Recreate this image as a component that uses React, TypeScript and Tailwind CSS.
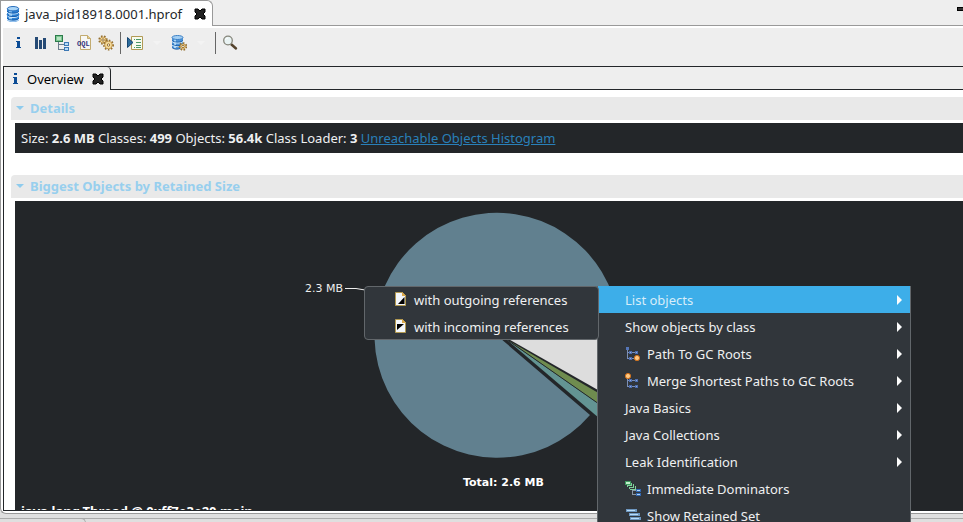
import type { ReactNode } from "react";
import { clsx } from "clsx";

interface IconProps {
  children: ReactNode;
  crisp?: boolean;
}

function Icon({ children, crisp = false }: IconProps) {
  return (
    <svg className="h-4 w-4 shrink-0" viewBox="0 0 16 16" fill="none" shapeRendering={crisp ? "crispEdges" : "auto"} aria-hidden="true">
      {children}
    </svg>
  );
}

function DatabaseIcon() {
  return (
    <Icon>
      <path d="M2 2.500v11C2 15 4.500 15.800 8 15.800s6-.8 6-2.300v-11z" fill="#2f83d6" />
      <path d="M4 3v11.500h3V3z" fill="#8cc6f5" />
      <path d="M2 6c1 1.500 3 2 6 2s5-.5 6-2M2 9.500c1 1.500 3 2 6 2s5-.5 6-2M2 13c1 1.500 3 2 6 2s5-.5 6-2" stroke="#d5ebfc" />
      <path d="M2 5c1 1.500 3 2 6 2s5-.5 6-2M2 8.500c1 1.500 3 2 6 2s5-.5 6-2M2 12c1 1.500 3 2 6 2s5-.5 6-2" stroke="#1a5fae" />
      <ellipse cx="8" cy="2.700" rx="5.700" ry="2.200" fill="#a9d5f8" stroke="#2a6fbd" />
    </Icon>
  );
}

function InfoIcon() {
  return (
    <Icon crisp>
      <path d="M7 2h3v2H7zM6 6h4v6h1v1H6v-1h1V7H6z" fill="#0b4c95" />
    </Icon>
  );
}

function HistogramIcon() {
  return (
    <Icon crisp>
      <path d="M3 2h3v12H3zM7 5h3v9H7zM11 3h3v11h-3z" fill="#254a75" />
    </Icon>
  );
}

function TreeIcon() {
  return (
    <Icon crisp>
      <path d="M4.500 7v7.500H10M4.500 9.500H10" stroke="#6b7c8c" />
      <rect x="1.500" y="0.500" width="7" height="6" fill="#7cc592" stroke="#2c7c4a" />
      <rect x="3" y="2" width="4" height="3" fill="#b7e5c1" />
      <rect x="10.500" y="7.500" width="4" height="3" fill="#b9dcf8" stroke="#3d78b4" />
      <rect x="10.500" y="12.500" width="4" height="3" fill="#b9dcf8" stroke="#3d78b4" />
    </Icon>
  );
}

function OqlIcon() {
  return (
    <Icon>
      <path d="M4.500.5h7l3 3v11h-10z" fill="#f7f7f4" stroke="#c2ab70" />
      <path d="M11.500.5v3h3" fill="#e8cf8b" stroke="#c2ab70" />
      <text x="1" y="11" fill="#30307e" fontSize="7" fontWeight="700" fontFamily="Liberation Mono, monospace">
        OQL
      </text>
    </Icon>
  );
}

function GearShape({ cx, cy, r }: { cx: number; cy: number; r: number }) {
  return (
    <g>
      <circle cx={cx} cy={cy} r={r} stroke="#95702f" strokeWidth="2" strokeDasharray="1.500 1.500" />
      <circle cx={cx} cy={cy} r={r - 0.7} fill="#f6dc9c" stroke="#b88a3f" strokeWidth="0.800" />
      <circle cx={cx} cy={cy} r="1.200" fill="#fff" stroke="#8b6322" strokeWidth="0.900" />
    </g>
  );
}

function GearsIcon() {
  return (
    <Icon>
      <GearShape cx={5} cy={5} r={3.700} />
      <GearShape cx={10.500} cy={10} r={4.500} />
    </Icon>
  );
}

function RunReportIcon() {
  return (
    <Icon>
      <path d="M4.500 1.500h11v13h-11z" fill="#f7fbef" stroke="#b19a55" />
      <path d="M7 4.500h1m1 0h5M9 7.500h5M9 10.500h5M7 12.500h1m1 0h5" stroke="#4c9966" />
      <path d="M.5 2.500v10l5.500-5z" fill="#2c6c9c" stroke="#174772" />
    </Icon>
  );
}

function DatabaseGearIcon() {
  return (
    <Icon>
      <path d="M1 3v9c0 1.200 2 2 5.500 2S12 13 12 12V3z" fill="#4b93d8" />
      <path d="M3 4v9h2V4z" fill="#a8d4f8" />
      <path d="M1 5.500c2 2.200 9 2.200 11 0M1 9c2 2.200 9 2.200 11 0M1 12.500c2 2 6 2 8 1" stroke="#1f62aa" />
      <path d="M1 6.500c2 2.200 9 2.200 11 0M1 10c2 2.200 9 2.200 11 0" stroke="#c7e3fa" />
      <ellipse cx="6.500" cy="2.500" rx="5.500" ry="2" fill="#a3cff4" stroke="#3b7fc4" />
      <GearShape cx={12} cy={11.500} r={3.300} />
    </Icon>
  );
}

function SearchIcon() {
  return (
    <Icon>
      <path d="M9.500 9.500l4.500 4" stroke="#54432c" strokeWidth="2.400" strokeLinecap="round" />
      <circle cx="6" cy="5.500" r="4.300" fill="#e9f3f3" stroke="#85857a" strokeWidth="1.300" />
      <path d="M3.500 5c.3-1.200 1.200-1.800 2.500-1.900" stroke="#fff" />
    </Icon>
  );
}

function CloseIcon() {
  return (
    <svg className="h-3 w-3" viewBox="0 0 12 12" aria-hidden="true">
      <path d="M1 1h3l2 2 2-2h3v3L9 6l2 2v3H8L6 9l-2 2H1V8l2-2-2-2z" fill="#222" stroke="#000" />
    </svg>
  );
}

function PathIcon({ merge = false }: { merge?: boolean }) {
  return (
    <Icon>
      <g transform={merge ? "translate(0 1)" : undefined} shapeRendering="crispEdges">
        <path d="M2.500 3v9.500H12M2.500 6.500H12" stroke="#7a8fb8" />
        <path d="M4 5h3v3H4zM10 5h3v3h-3zM4 11h3v3H4zM10 11h3v3h-3z" fill="#4c6db0" />
        <path d="M5 6h1v1H5zM11 6h1v1h-1zM5 12h1v1H5zM11 12h1v1h-1z" fill="#8ea9dc" />
        {!merge && <path d="M1 1h3v3H1z" fill="#5677b9" />}
      </g>
      <circle cx={merge ? 3 : 12} cy={merge ? 3 : 12} r="2.600" fill="#ffc982" stroke="#d4711a" />
    </Icon>
  );
}

function DominatorsIcon() {
  return (
    <Icon crisp>
      <path d="M7.500 9v4.500H11M7.500 9.500H11" stroke="#8896a6" />
      <path d="M0 0h6v4H0z" fill="#3f9a60" />
      <path d="M1 1h4v2H1z" fill="#c3f0cb" />
      <path d="M6 2h1v3H3v1h5V3h1v4H5v1h5V5h1v4H5V8H4V6H2V4h4z" fill="#7fd09a" />
      <path d="M11 8h5v3h-5zM11 12h5v3h-5z" fill="#3267b0" />
      <path d="M12 9h3v1h-3zM12 13h3v1h-3z" fill="#acd6fa" />
    </Icon>
  );
}

function RetainedSetIcon() {
  return (
    <Icon crisp>
      <path d="M1 1h11v3H1zM4 5h11v3H4zM5 9h11v3H5z" fill="#6d96bf" />
      <path d="M2 2h8v1H2zM5 6h8v1H5zM6 10h8v1H6z" fill="#b8dcf8" />
    </Icon>
  );
}

function ReferenceIcon({ incoming = false }: { incoming?: boolean }) {
  return (
    <Icon>
      <path d="M3.500.5h7l3 3v10h-10z" fill="#f3f7fc" stroke="#b39a50" />
      <path d="M10 0l4 4h-4z" fill="#dca94b" />
      <path d={incoming ? "M5 5h7l-7 6z" : "M12.500 5v7H6z"} fill="#000" />
    </Icon>
  );
}

interface ToolButtonProps {
  label: string;
  children: ReactNode;
}

function ToolButton({ label, children }: ToolButtonProps) {
  return (
    <button type="button" aria-label={label} className="flex h-6 w-[22px] items-center justify-center">
      {children}
    </button>
  );
}

function DropArrow({ label }: { label: string }) {
  return (
    <ToolButton label={label}>
      <svg className="h-1 w-2" viewBox="0 0 8 4" aria-hidden="true">
        <path d="M0 0h8L4 4z" fill="#f3f3f3" />
      </svg>
    </ToolButton>
  );
}

function SectionHeader({ title }: { title: string }) {
  return (
    <h2 className="ml-[7px] h-[23px] shrink-0 rounded-tl-sm bg-[#e9e9e9] font-bold text-[#97cfee]">
      <button type="button" aria-expanded="true" className="flex h-[22px] items-center gap-[6px] pl-[5px]">
        <svg className="h-1 w-2" viewBox="0 0 8 4" aria-hidden="true">
          <path d="M0 0h8L4 4z" fill="#8ecbed" />
        </svg>
        {title}
      </button>
    </h2>
  );
}

function RetainedPie() {
  return (
    <svg className="ml-[280px] block h-[300px] w-[340px]" viewBox="0 0 340 300" role="img" aria-label="Biggest objects by retained size">
      <path d="M202 134.500L295 214A122.500 122.500 0 1 1 318 95z" fill="#61808f" />
      <path d="M211 136.500L324 201L324 110z" fill="#dddddd" />
      <path d="M211 138L324 204L324 217z" fill="#6f8c4f" />
      <path d="M211 138L324 217L324 234z" fill="#639493" />
      <path d="M211 138L324 217" stroke="#23272a" />
      <path d="M50 87.500h11l9 1.500" fill="none" stroke="#eee" />
      <text x="10" y="91" fill="#eeeeee" fontSize="11" fontFamily="DejaVu Sans, sans-serif">
        2.3 MB
      </text>
      <text x="168" y="285" fill="#ffffff" fontSize="11" fontWeight="700" fontFamily="DejaVu Sans, sans-serif">
        Total: 2.6 MB
      </text>
    </svg>
  );
}

interface MenuEntry {
  label: string;
  icon?: ReactNode;
  submenu?: boolean;
  active?: boolean;
}

const menuEntries: MenuEntry[] = [
  { label: "List objects", submenu: true, active: true },
  { label: "Show objects by class", submenu: true },
  { label: "Path To GC Roots", icon: <PathIcon />, submenu: true },
  { label: "Merge Shortest Paths to GC Roots", icon: <PathIcon merge />, submenu: true },
  { label: "Java Basics", submenu: true },
  { label: "Java Collections", submenu: true },
  { label: "Leak Identification", submenu: true },
  { label: "Immediate Dominators", icon: <DominatorsIcon /> },
  { label: "Show Retained Set", icon: <RetainedSetIcon /> },
];

function ContextMenu() {
  return (
    <div role="menu" className="absolute left-[597px] top-[286px] w-[314px] border-x border-[#62676b] bg-[#31363b]">
      {menuEntries.map((entry) => (
        <button
          key={entry.label}
          type="button"
          role="menuitem"
          aria-haspopup={entry.submenu ? "menu" : undefined}
          className={clsx(
            "flex h-[27px] w-full items-center gap-[6px] pl-[27px] pr-2 text-left",
            entry.active ? "bg-[#3daee9] text-[#d7edf9]" : "text-[#eff0f1]",
          )}
        >
          {entry.icon}
          <span className="flex-1">{entry.label}</span>
          {entry.submenu && (
            <svg className="h-[10px] w-[5px]" viewBox="0 0 5 10" aria-hidden="true">
              <path d="M0 0l5 5-5 5z" fill="#fcfcfc" />
            </svg>
          )}
        </button>
      ))}
    </div>
  );
}

function ReferencesSubmenu() {
  return (
    <div
      role="menu"
      className="absolute left-[364px] top-[286px] flex w-[235px] flex-col gap-[2px] rounded-sm border border-[#62676b] bg-[#31363b] text-[#eff0f1]"
    >
      <button type="button" role="menuitem" className="flex h-[25px] items-center gap-[6px] pl-[27px] text-left">
        <ReferenceIcon />
        with outgoing references
      </button>
      <button type="button" role="menuitem" className="flex h-[25px] items-center gap-[6px] pl-[27px] text-left">
        <ReferenceIcon incoming />
        with incoming references
      </button>
    </div>
  );
}

export default function App() {
  return (
    <div className="relative flex h-screen flex-col overflow-hidden bg-[#dfdfdf] font-['Noto_Sans',sans-serif] text-[13px] leading-5 text-[#232629]">
      <main className="flex min-h-0 flex-1 flex-col rounded-bl-md border-b border-l border-[#999] bg-white pb-[2px]">
        <header className="flex h-[26px] shrink-0 bg-[#eee]">
          <div className="flex items-center gap-1 rounded-tr-md border-r border-t border-[#999] bg-white pl-1 pr-[6px]">
            <DatabaseIcon />
            <span>java_pid18918.0001.hprof</span>
            <button type="button" aria-label="Close file" className="ml-2">
              <CloseIcon />
            </button>
          </div>
          <div className="flex flex-1 items-start justify-end border-b border-[#999]">
            <button type="button" aria-label="Minimize" className="mt-[7px] h-1 w-[6px] border border-r-0 border-black bg-[#333]" />
          </div>
        </header>

        <div className="ml-[2px] mt-[2px] flex h-[38px] shrink-0 items-center bg-[#eee] pb-2 pl-1">
          <ToolButton label="Overview"><InfoIcon /></ToolButton>
          <ToolButton label="Histogram"><HistogramIcon /></ToolButton>
          <ToolButton label="Dominator tree"><TreeIcon /></ToolButton>
          <ToolButton label="Object query"><OqlIcon /></ToolButton>
          <ToolButton label="Thread overview"><GearsIcon /></ToolButton>
          <div className="mx-[3px] h-[22px] w-px bg-[#666]" />
          <ToolButton label="Run report"><RunReportIcon /></ToolButton>
          <DropArrow label="More reports" />
          <ToolButton label="Query browser"><DatabaseGearIcon /></ToolButton>
          <DropArrow label="More queries" />
          <div className="mx-[3px] h-[22px] w-px bg-[#666]" />
          <ToolButton label="Find object"><SearchIcon /></ToolButton>
        </div>

        <section className="ml-[2px] flex min-h-0 flex-1 flex-col border-b border-l border-t border-[#232629]">
          <div className="flex h-[23px] shrink-0 bg-[#eee]">
            <div className="flex items-center gap-1 rounded-tr-sm border-r border-[#232629] pl-[3px] pr-[6px] text-black">
              <InfoIcon />
              <span>Overview</span>
              <button type="button" aria-label="Close overview" className="ml-1">
                <CloseIcon />
              </button>
            </div>
            <div className="flex-1 border-b border-[#232629]" />
          </div>

          <div className="flex min-h-0 flex-1 flex-col pt-[7px]">
            <SectionHeader title="Details" />
            <p className="mb-[22px] ml-[11px] mt-[3px] h-[30px] shrink-0 whitespace-nowrap bg-[#232629] pl-[6px] leading-[30px] text-[#eff0f1]">
              Size: <b>2.6 MB</b> Classes: <b>499</b> Objects: <b>56.4k</b> Class Loader: <b>3</b>{" "}
              <a href="#histogram" className="text-[#2980b9] underline">
                Unreachable Objects Histogram
              </a>
            </p>
            <SectionHeader title="Biggest Objects by Retained Size" />
            <div className="ml-[11px] mt-[3px] min-h-0 flex-1 overflow-hidden bg-[#232629]">
              <RetainedPie />
              <p className="pl-[6px] font-bold text-white">java.lang.Thread @ 0xff7e3e20 main</p>
            </div>
          </div>
        </section>
      </main>

      <footer className="mt-1 h-1 shrink-0 border-t border-[#aaa]">
        <div className="-mt-px h-[5px] w-[86px] rounded-tr-md border-r border-t border-[#aaa]" />
      </footer>

      <ContextMenu />
      <ReferencesSubmenu />
    </div>
  );
}
